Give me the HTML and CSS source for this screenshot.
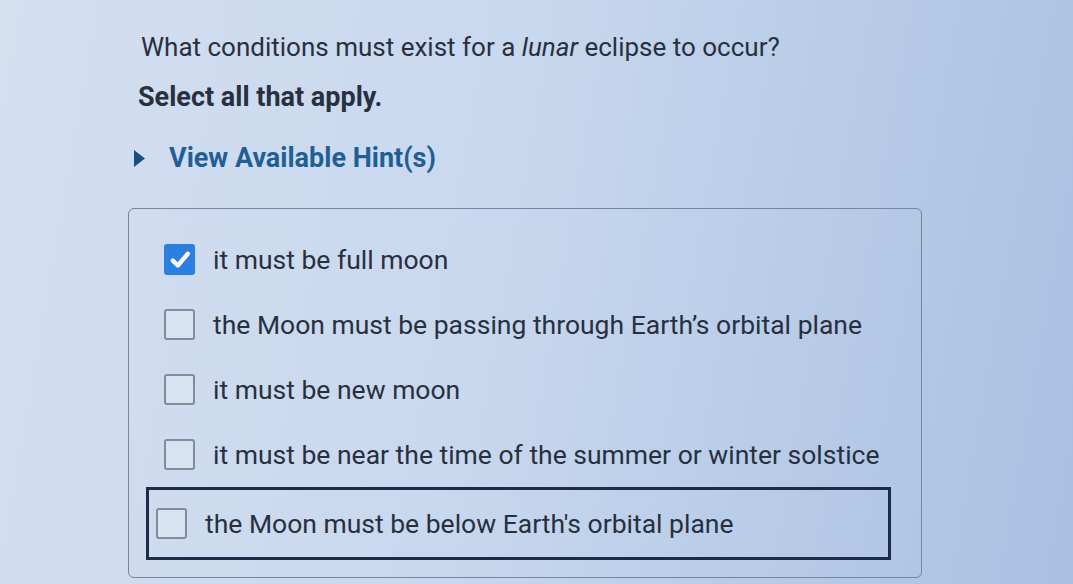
FILE: index.html
```html
<!DOCTYPE html>
<html lang="en">
<head>
    <meta charset="UTF-8">
    <title>Lunar eclipse question</title>
    <link rel="stylesheet" href="styles.css">
</head>
<body>
    <div class="question">
        <p class="prompt">What conditions must exist for a <em>lunar</em> eclipse to occur?</p>
        <p class="instruction">Select all that apply.</p>
        <div class="hint">
            <svg class="hint-arrow" width="13" height="19" viewBox="0 0 13 19"><path d="M1 1 L12 9.5 L1 18 Z" fill="#1b4f82"/></svg>
            <span>View Available Hint(s)</span>
        </div>
        <div class="choices">
            <label class="choice">
                <span class="box checked">
                    <svg width="24" height="24" viewBox="0 0 20 20"><path d="M4 10.5 L8.2 14.6 L16.5 4.8" fill="none" stroke="#fff" stroke-width="3.6" stroke-linecap="round" stroke-linejoin="round"/></svg>
                </span>
                <span class="text">it must be full moon</span>
            </label>
            <label class="choice">
                <span class="box"></span>
                <span class="text">the Moon must be passing through Earth’s orbital plane</span>
            </label>
            <label class="choice">
                <span class="box"></span>
                <span class="text">it must be new moon</span>
            </label>
            <label class="choice">
                <span class="box"></span>
                <span class="text">it must be near the time of the summer or winter solstice</span>
            </label>
            <label class="choice focused">
                <span class="box"></span>
                <span class="text">the Moon must be below Earth's orbital plane</span>
            </label>
        </div>
    </div>
</body>
</html>
```

FILE: styles.css
```css
body {
    margin: 0;
    height: 584px;
    overflow: hidden;
    font-family: Roboto, "Liberation Sans", sans-serif;
    color: #283040;
    background: linear-gradient(100deg, #d4dff0 0%, #c8d8ee 45%, #a9c0e1 100%);
}

.question {
    padding: 31px 0 0 128px;
    width: 800px;
}

.prompt {
    margin: 0 0 0 13px;
    font-size: 26px;
    line-height: 32px;
}

.instruction {
    margin: 18px 0 0 10px;
    font-size: 27px;
    font-weight: bold;
    line-height: 32px;
}

.hint {
    display: flex;
    align-items: center;
    gap: 23px;
    height: 30px;
    margin: 30px 0 0 5px;
    font-size: 27px;
    font-weight: bold;
    color: #1f5f98;
}

.choices {
    margin-top: 35px;
    width: 794px;
    padding: 18px 30px 17px 17px;
    box-sizing: border-box;
    border: 1px solid #75869e;
    border-radius: 6px;
}

.choice {
    display: flex;
    align-items: center;
    gap: 18px;
    height: 65px;
    padding-left: 18px;
    font-size: 26.5px;
}

.choice.focused {
    height: 67px;
    border: 3px solid #1e2b48;
    padding-left: 7px;
}

.box {
    width: 27px;
    height: 27px;
    flex: none;
    border: 2px solid #828c9b;
    border-radius: 3px;
    background: #d8e3f2;
    display: flex;
    align-items: center;
    justify-content: center;
}

.box.checked {
    border-color: #2a7fe3;
    background: #2a7fe3;
}
```
